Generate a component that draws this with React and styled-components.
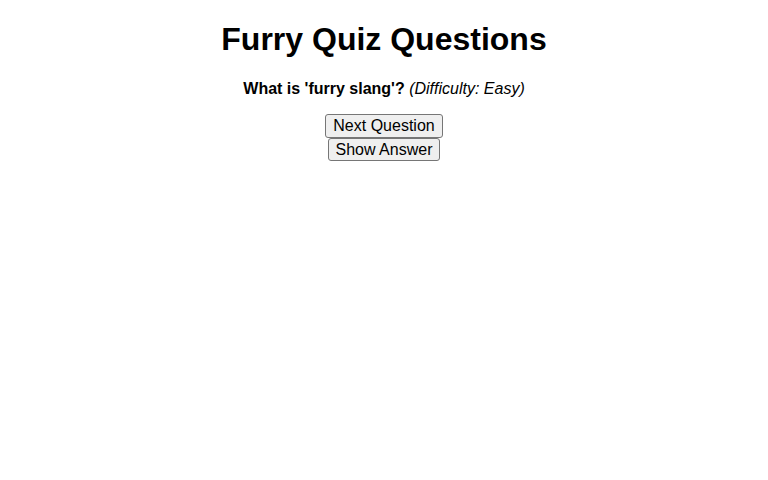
import React, { useState } from "react";
import styled, { createGlobalStyle } from "styled-components";

const GlobalStyle = createGlobalStyle`
  html, body {
    margin: 0;
    padding: 0;
    background: #ffffff;
  }
  body {
    font-family: "Liberation Sans", Arial, sans-serif;
    color: #000000;
  }
`;

const Page = styled.div`
  display: flex;
  flex-direction: column;
  align-items: center;
  text-align: center;
`;

const Title = styled.h1`
  font-size: 32px;
  font-weight: bold;
  margin: 21.44px 0;
`;

const Question = styled.p`
  font-size: 16px;
  margin: 0 0 16px;
`;

const Prompt = styled.strong`
  font-weight: bold;
`;

const Difficulty = styled.em`
  font-style: italic;
`;

const Actions = styled.div`
  display: flex;
  flex-direction: column;
  align-items: center;
  padding-top: 0.5px;
`;

const Button = styled.button`
  font-family: "Liberation Sans", Arial, sans-serif;
  font-size: 16px;
  line-height: 18px;
  color: #000000;
  background: #efefef;
  border: 1px solid #767676;
  border-radius: 3px;
  padding: 2px 7px 1.5px;
  cursor: pointer;
  &:hover {
    background: #e5e5e5;
  }
`;

const questions = [
  { text: "What is 'furry slang'?", difficulty: "Easy", answer: "Words and phrases used within the furry fandom." },
];

export default function App() {
  const [index, setIndex] = useState(0);
  const [showAnswer, setShowAnswer] = useState(false);
  const q = questions[index];

  return (
    <>
      <GlobalStyle />
      <Page>
        <Title>Furry Quiz Questions</Title>
        <Question>
          <Prompt>{q.text}</Prompt> <Difficulty>(Difficulty: {q.difficulty})</Difficulty>
        </Question>
        <Actions>
          <Button
            onClick={() => {
              setIndex((index + 1) % questions.length);
              setShowAnswer(false);
            }}
          >
            Next Question
          </Button>
          <Button onClick={() => setShowAnswer(!showAnswer)}>Show Answer</Button>
        </Actions>
        {showAnswer && <Question>{q.answer}</Question>}
      </Page>
    </>
  );
}
